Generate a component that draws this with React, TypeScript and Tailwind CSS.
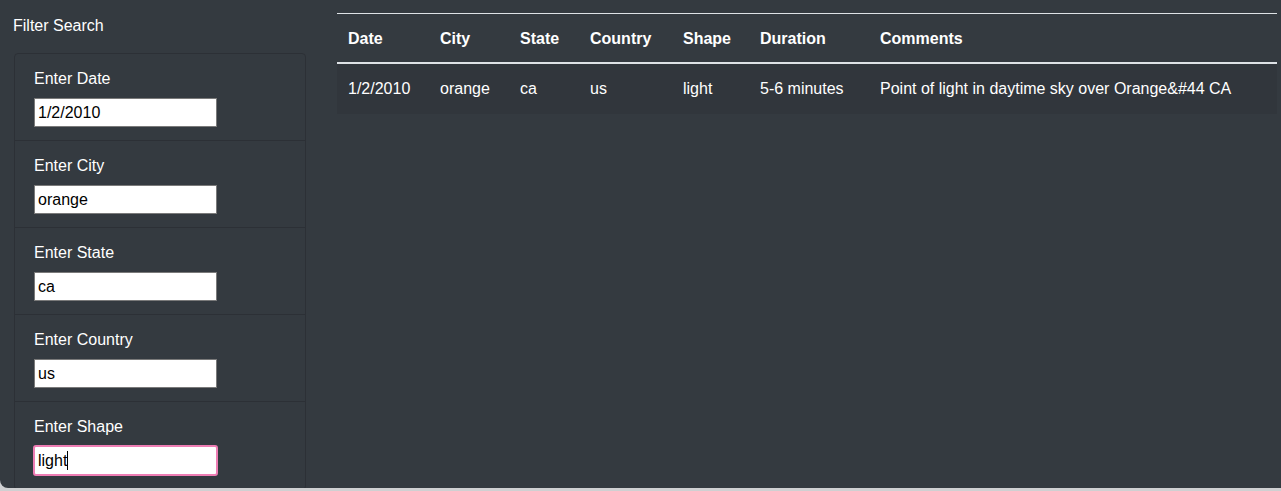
import React from 'react'

// filter fields shown in the sidebar
const filters = [
  { label: 'Enter Date', value: '1/2/2010' },
  { label: 'Enter City', value: 'orange' },
  { label: 'Enter State', value: 'ca' },
  { label: 'Enter Country', value: 'us' },
  { label: 'Enter Shape', value: 'light', focused: true },
]

const columns = [
  { name: 'Date', w: 'w-[92px]' },
  { name: 'City', w: 'w-[80px]' },
  { name: 'State', w: 'w-[70px]' },
  { name: 'Country', w: 'w-[93px]' },
  { name: 'Shape', w: 'w-[77px]' },
  { name: 'Duration', w: 'w-[120px]' },
  { name: 'Comments', w: '' },
]

const rows = [
  ['1/2/2010', 'orange', 'ca', 'us', 'light', '5-6 minutes', 'Point of light in daytime sky over Orange&#44 CA'],
]

export default function App() {
  return (
    <div
      className="h-[491px] w-full bg-[#cfd0d2] overflow-hidden"
      style={{ fontFamily: '"Liberation Sans", Arial, sans-serif' }}
    >
      <div className="h-[488px] bg-[#343a40] rounded-bl-[8px] overflow-hidden flex text-white">
        {/* sidebar */}
        <aside className="w-[337px] shrink-0 pl-[13px] pr-[31px]">
          <h2 className="text-[16px] leading-6 pt-[14px] pb-[15px]">Filter Search</h2>
          <ul className="ml-px border border-[#2c3036] rounded-[4px]">
            {filters.map((f, i) => (
              <li
                key={f.label}
                className={`px-[19px] pt-[13px] pb-[13px] ${i > 0 ? 'border-t border-[#2c3036]' : ''}`}
              >
                <label className="block text-[16px] leading-6 mb-[7px]">{f.label}</label>
                {f.focused ? (
                  <div className="w-[185px] h-[31px] -ml-px -mt-px border-2 border-[#ee7db4] rounded-[3px] bg-white text-black text-[16px] leading-[27px] pl-[3px] flex items-center">
                    <span>{f.value}</span>
                    <span className="inline-block w-px h-[19px] bg-black" />
                  </div>
                ) : (
                  <input
                    readOnly
                    value={f.value}
                    className="block w-[183px] h-[29px] border border-[#7a7a7a] bg-white text-black text-[16px] px-[3px] outline-none"
                  />
                )}
              </li>
            ))}
          </ul>
        </aside>

        {/* results table */}
        <main className="flex-1 pt-[13px] pr-[4px]">
          <table className="w-full border-collapse text-[16px] leading-6">
            <thead>
              <tr className="border-t border-[#dee2e6]">
                {columns.map((c) => (
                  <th
                    key={c.name}
                    className={`${c.w} text-left font-bold px-[11px] pt-[13px] pb-[11px] border-b-2 border-[#dee2e6]`}
                  >
                    {c.name}
                  </th>
                ))}
              </tr>
            </thead>
            <tbody>
              {rows.map((r, i) => (
                <tr key={i} className="bg-[#31363c]">
                  {r.map((cell, j) => (
                    <td key={j} className="px-[11px] py-[13px] whitespace-nowrap">
                      {cell}
                    </td>
                  ))}
                </tr>
              ))}
            </tbody>
          </table>
        </main>
      </div>
    </div>
  )
}
